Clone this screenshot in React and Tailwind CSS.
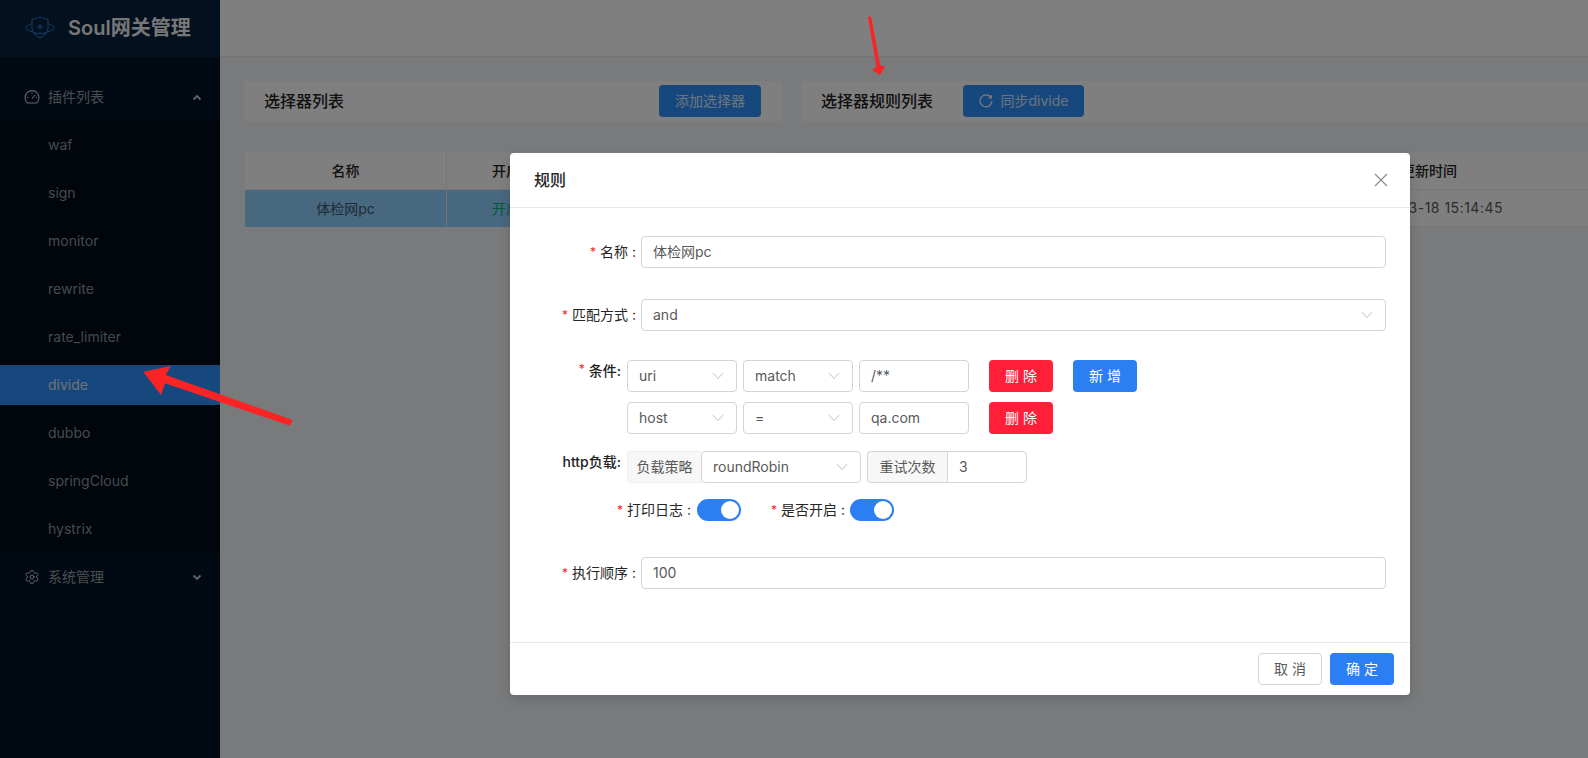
import React from 'react';
import { Settings } from 'lucide-react';

const font = { fontFamily: '"Inter", "Noto Sans CJK SC", sans-serif' };

const subItems = ['waf', 'sign', 'monitor', 'rewrite', 'rate_limiter', 'divide', 'dubbo', 'springCloud', 'hystrix'];

const Chevron = () => (
  <svg width="12" height="8" viewBox="0 0 12 8" fill="none" stroke="#bfbfbf" strokeWidth="1">
    <path d="M1 1.2l5 5.3 5-5.3" />
  </svg>
);

const MenuCaret = ({ up }) => (
  <svg width="10" height="7" viewBox="0 0 10 7" fill="none" stroke="#c4c8cc" strokeWidth="1.8">
    <path d={up ? 'M1.5 5.5L5 2l3.5 3.5' : 'M1.5 1.5L5 5l3.5-3.5'} />
  </svg>
);

const Logo = () => (
  <svg width="30" height="24" viewBox="0 0 30 24" fill="none" stroke="#2f80d8" strokeWidth="1">
    <path d="M7 3.5C10 2.8 13 2 15 1c2 1 5 1.800 8 2.500v8c0 5-4 8.500-8 10.500-4-2-8-5.500-8-10.500z" />
    <path d="M7 7.500C3 9 1 10.500 1 12c0 1.300 2.500 2.800 6.500 3.800M23 7.500c4 1.500 6 3 6 4.500 0 1.300-2.500 2.800-6.500 3.800" />
    <path d="M8 16.500c4 1.300 10 1.300 14 0" />
    <path d="M15 8v6M12 11h6" />
  </svg>
);

const GaugeIcon = () => (
  <svg width="16" height="14" viewBox="0 0 16 14" fill="none" stroke="#c4c8cc" strokeWidth="1.1">
    <path d="M3.500 13a7 7 0 1 1 9 0z" />
    <path d="M8 8.500l3-3.500M3 7.500h1.200M11.800 7.500H13M8 2.500v1.200" />
  </svg>
);

const SyncIcon = () => (
  <svg width="14" height="14" viewBox="0 0 14 14" fill="none" stroke="#ffffff" strokeWidth="1.200">
    <path d="M12 3.500A6 6 0 1 0 13 7" />
    <path d="M12.300 1v3h-3" />
  </svg>
);

const Select = ({ value, w }) => (
  <div className={`flex h-8 items-center justify-between rounded border border-[#d4d4d4] bg-white pl-[11px] pr-3 text-sm text-[#595959] ${w}`}>
    <span>{value}</span>
    <Chevron />
  </div>
);

const Input = ({ value, w }) => (
  <div className={`flex h-8 items-center rounded border border-[#d4d4d4] bg-white px-[11px] text-sm text-[#595959] ${w}`}>{value}</div>
);

const FormLabel = ({ text }) => (
  <div className="flex w-[131px] shrink-0 items-center justify-end text-sm text-[#262626]">
    <span className="mr-1 text-xs text-[#f5222d]">*</span>
    {text}
    <span className="ml-1 mr-[5px]">:</span>
  </div>
);

const Toggle = () => (
  <div className="flex h-[22px] w-11 items-center justify-end rounded-full bg-[#2b7ff3] pr-[2px]">
    <div className="h-[18px] w-[18px] rounded-full bg-white" />
  </div>
);

const ActionBtn = ({ text, color }) => (
  <div className={`flex h-8 w-16 items-center justify-center rounded text-sm text-white ${color}`}>{text}</div>
);

export default function App() {
  return (
    <div className="relative flex h-screen w-full overflow-hidden bg-[#f3f5f9]" style={font}>
      {/* Sidebar */}
      <aside className="flex w-[220px] shrink-0 flex-col bg-[#031526]">
        <div className="flex h-[57px] items-center gap-[13px] bg-[#06203c] pb-[2px] pl-[25px]">
          <Logo />
          <span className="text-xl font-semibold text-[#eeeeee]">Soul网关管理</span>
        </div>
        <div className="mt-4 flex h-12 items-center justify-between pl-6 pr-[18px] text-sm text-[#969a9f]">
          <div className="flex items-center gap-2">
            <GaugeIcon />
            <span>插件列表</span>
          </div>
          <MenuCaret up />
        </div>
        <ul className="bg-[#000d18] pt-1 text-sm text-[#8f9398]">
          {subItems.map((item) => (
            <li
              key={item}
              className={`mb-2 flex h-10 items-center pl-12 last:mb-1 ${item === 'divide' ? 'bg-[#2c90fa] text-[#e4e4e4]' : ''}`}
            >
              {item}
            </li>
          ))}
        </ul>
        <div className="flex h-12 items-center justify-between pl-6 pr-[18px] text-sm text-[#969a9f]">
          <div className="flex items-center gap-2">
            <Settings size={16} strokeWidth={1.5} color="#c4c8cc" />
            <span>系统管理</span>
          </div>
          <MenuCaret />
        </div>
      </aside>

      {/* Main */}
      <main className="flex min-w-0 flex-1 flex-col">
        <div className="h-[57px] shrink-0 border-b border-[#e8e8e8] bg-white" />
        <div className="flex pl-6 pt-6">
          {/* Selector list */}
          <section className="w-[538px] shrink-0">
            <div className="flex h-10 items-center justify-between bg-white pl-5 pr-[21px]">
              <h2 className="text-base font-medium text-[#222]">选择器列表</h2>
              <div className="flex h-8 w-[102px] items-center justify-center rounded bg-[#2c90fa] text-sm text-white/80">添加选择器</div>
            </div>
            <div className="ml-px mt-[31px] text-sm">
              <div className="grid h-[38px] grid-cols-[202px_1fr] items-center border-b border-[#eee] bg-white font-medium text-[#222]">
                <div className="flex h-full items-center justify-center border-r border-[#e8e8e8]">名称</div>
                <div className="pl-[45px]">开启</div>
              </div>
              <div className="grid h-[37px] grid-cols-[202px_1fr] items-center bg-[#8fd0ff] text-[#40566e]">
                <div className="flex h-full items-center justify-center border-r border-[#e8e8e8]">体检网pc</div>
                <div className="pl-[45px] text-[#09b57a]">开启</div>
              </div>
            </div>
          </section>

          {/* Rule list */}
          <section className="ml-[19px] min-w-0 flex-1">
            <div className="flex h-10 items-center gap-[30px] bg-white pl-5">
              <h2 className="text-base font-medium text-[#222]">选择器规则列表</h2>
              <div className="flex h-8 w-[121px] items-center justify-center gap-2 rounded bg-[#2c90fa] text-sm text-white/80">
                <SyncIcon />
                同步divide
              </div>
            </div>
            <div className="mt-[31px] text-sm">
              <div className="flex h-[38px] items-center justify-end border-b border-[#eee] bg-white pr-[131px] font-medium text-[#222]">更新时间</div>
              <div className="flex h-[37px] items-center justify-end border-b border-[#eee] bg-white pr-[85px] tracking-[0.5px] text-[#595959]">2019-03-18 15:14:45</div>
            </div>
          </section>
        </div>
      </main>

      {/* Mask */}
      <div className="absolute inset-0 bg-black/50" />

      {/* Annotation arrows */}
      <svg className="absolute left-0 top-0" width="1588" height="758" fill="#fb2424">
        <polygon points="143.300,371.700 170.700,366 165.700,375 292.700,420 290,425.700 165,383.300 161,395" />
        <polygon points="867.800,16.700 871.200,16.700 880,65 885,66.700 880,75 872,70 876.500,66.700" />
      </svg>

      {/* Modal */}
      <div className="absolute left-[510px] top-[153px] flex h-[542px] w-[900px] flex-col rounded bg-white shadow-[0_4px_12px_rgba(0,0,0,0.15)]">
        <div className="flex h-[55px] shrink-0 items-center justify-between border-b border-[#e8e8e8] pl-6 pr-[22px]">
          <h3 className="text-base font-medium text-[#262626]">规则</h3>
          <svg width="14" height="14" viewBox="0 0 14 14" fill="none" stroke="#8c8c8c" strokeWidth="1.200">
            <path d="M1 1l12 12M13 1L1 13" />
          </svg>
        </div>

        <div className="flex-1 pr-6 pt-[28px]">
          <div className="flex">
            <FormLabel text="名称" />
            <Input value="体检网pc" w="flex-1" />
          </div>
          <div className="mt-[31px] flex">
            <FormLabel text="匹配方式" />
            <Select value="and" w="flex-1" />
          </div>

          <div className="mt-[29px] flex">
            <div className="flex h-8 w-[111px] shrink-0 justify-end pt-[1px] text-sm font-medium text-[#222]">
              <span className="mr-1 text-xs font-normal text-[#f5222d]">*</span>条件:
            </div>
            <div className="ml-1.5 flex flex-col gap-2.5">
              <div className="flex gap-1.5">
                <Select value="uri" w="w-[110px]" />
                <Select value="match" w="w-[110px]" />
                <Input value="/**" w="w-[110px]" />
                <ActionBtn text="删 除" color="ml-3.5 bg-[#ff1f39]" />
                <ActionBtn text="新 增" color="ml-3.5 bg-[#2b7ff3]" />
              </div>
              <div className="flex gap-1.5">
                <Select value="host" w="w-[110px]" />
                <Select value="=" w="w-[110px]" />
                <Input value="qa.com" w="w-[110px]" />
                <ActionBtn text="删 除" color="ml-3.5 bg-[#ff1f39]" />
              </div>
            </div>
          </div>

          <div className="mt-[17px] flex">
            <div className="w-[111px] shrink-0 pt-[1px] text-right text-sm font-medium text-[#222]">http负载:</div>
            <div className="ml-1.5 flex">
              <div className="flex h-8 w-[74px] items-center justify-center rounded-l border border-r-0 border-[#eeeeee] bg-[#f7f7f7] text-sm text-[#595959]">负载策略</div>
              <Select value="roundRobin" w="w-[160px]" />
              <div className="ml-1.5 flex h-8 w-20 items-center justify-center rounded-l border border-r-0 border-[#d4d4d4] bg-[#f7f7f7] text-sm text-[#595959]">重试次数</div>
              <div className="flex h-8 w-20 items-center rounded-r border border-[#d4d4d4] px-[11px] text-sm text-[#595959]">3</div>
            </div>
          </div>

          <div className="mt-4 flex items-center pl-[107px] text-sm text-[#262626]">
            <span className="mr-1 text-xs text-[#f5222d]">*</span>
            <span>打印日志</span>
            <span className="ml-1 mr-[6px]">:</span>
            <Toggle />
            <span className="ml-[30px] mr-1 text-xs text-[#f5222d]">*</span>
            <span>是否开启</span>
            <span className="ml-1 mr-[5px]">:</span>
            <Toggle />
          </div>

          <div className="mt-9 flex">
            <FormLabel text="执行顺序" />
            <Input value="100" w="flex-1" />
          </div>
        </div>

        <div className="flex h-[53px] shrink-0 items-start justify-end gap-2 border-t border-[#e8e8e8] pr-4 pt-[10px]">
          <div className="flex h-8 w-16 items-center justify-center rounded border border-[#d4d4d4] bg-white text-sm text-[#595959]">取 消</div>
          <div className="flex h-8 w-16 items-center justify-center rounded bg-[#2b7ff3] text-sm text-white">确 定</div>
        </div>
      </div>
    </div>
  );
}
